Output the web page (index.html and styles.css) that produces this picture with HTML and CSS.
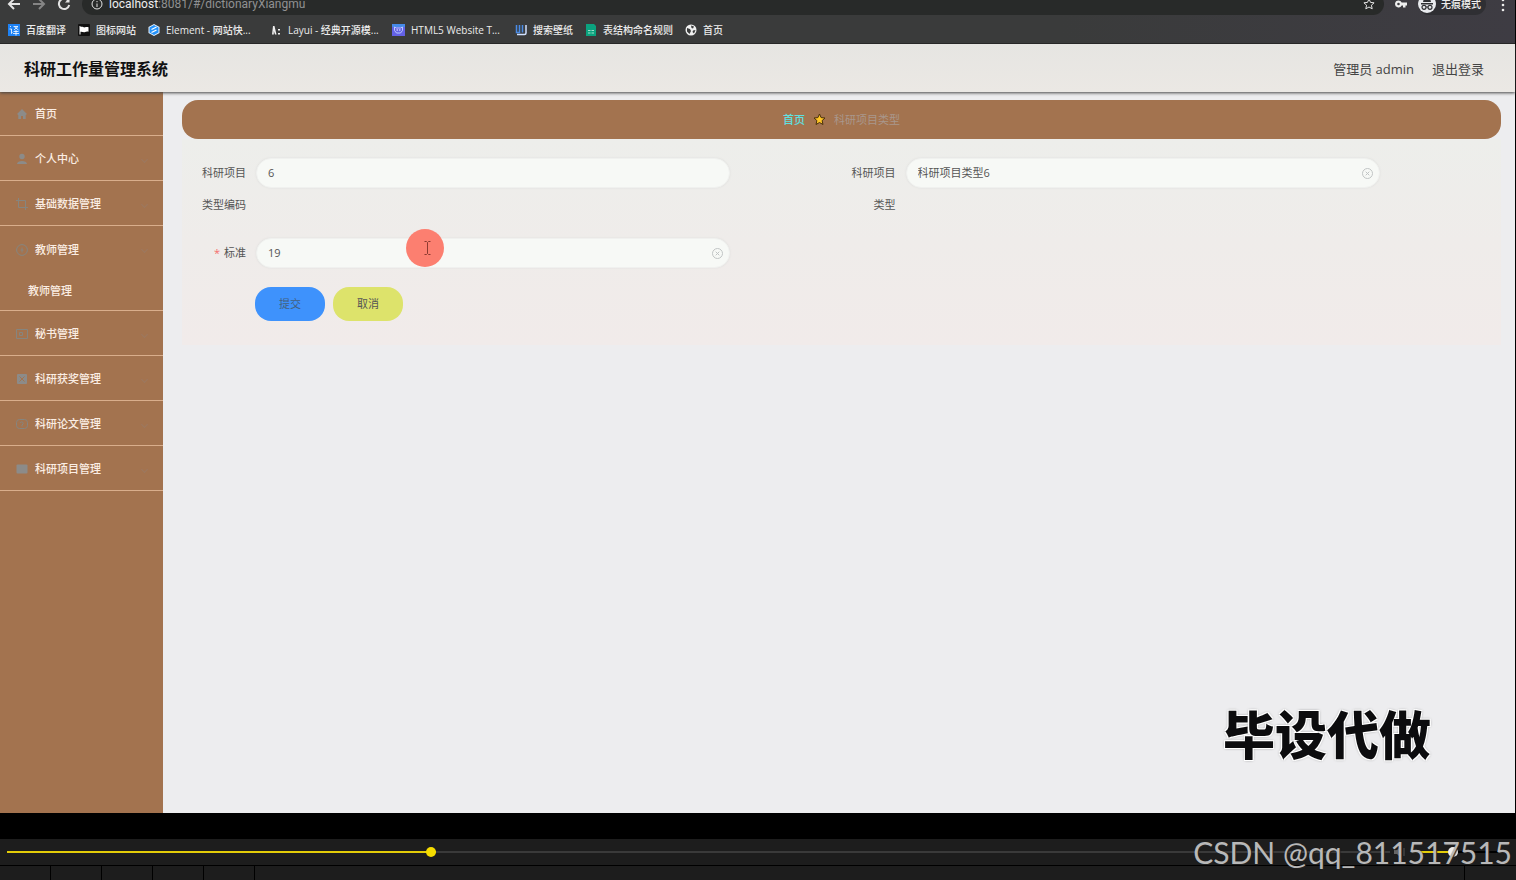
FILE: index.html
```html
<!DOCTYPE html>
<html lang="zh-CN">
<head>
<meta charset="utf-8">
<title>科研工作量管理系统</title>
<link rel="stylesheet" href="styles.css">
</head>
<body>
<div class="screen">
  <div class="toolbar">
    <button class="tool back" aria-label="后退"><svg width="14" height="14" viewBox="0 0 14 14"><path d="M13 7H2M7 2L2 7l5 5" /></svg></button>
    <button class="tool forward" aria-label="前进"><svg width="14" height="14" viewBox="0 0 14 14"><path d="M1 7h11M7 2l5 5-5 5" /></svg></button>
    <button class="tool reload" aria-label="刷新"><svg width="14" height="14" viewBox="0 0 14 14"><path d="M11.5 4A5.2 5.2 0 1 0 12.200 8" /><path d="M12.500 1v4.500H8z" class="solid" /></svg></button>
    <div class="address">
      <svg width="12" height="12" viewBox="0 0 12 12"><circle cx="6" cy="6" r="5" /><path d="M6 5.500V9M6 3v1.200" /></svg>
      <span class="url"><b>localhost</b>:8081/#/dictionaryXiangmu</span>
      <svg class="star" width="12" height="12" viewBox="0 0 12 12"><path d="M6 1l1.500 3.400 3.600.4-2.700 2.400.8 3.600L6 9l-3.200 1.800.8-3.600L.9 4.800l3.600-.4z" /></svg>
    </div>
    <svg class="key" width="12" height="12" viewBox="0 0 12 12"><path fill-rule="evenodd" d="M3.500 2.500a3.500 3.500 0 1 0 3.200 5H8V9.500h2.500V7.500H12V4.500H6.700A3.500 3.500 0 0 0 3.500 2.500zm0 2.200a1.300 1.300 0 1 1 0 2.600 1.300 1.300 0 0 1 0-2.600z" /></svg>
    <div class="incognito">
      <svg width="18" height="18" viewBox="0 0 18 18"><circle cx="9" cy="9" r="9" fill="#e8eaed" /><path d="M6 3h6l1 4H5zM3 8h12v1.500H3z" fill="#303134" /><g fill="none" stroke="#303134" stroke-width="1.200"><circle cx="6" cy="12.300" r="2" /><circle cx="12" cy="12.300" r="2" /><path d="M8 12h2" /></g></svg>
      <span>无痕模式</span>
    </div>
    <svg class="dots" width="4" height="14" viewBox="0 0 4 14"><circle cx="2" cy="2" r="1.300" /><circle cx="2" cy="7" r="1.300" /><circle cx="2" cy="12" r="1.300" /></svg>
  </div>

  <nav class="bookmarks">
    <a href="#"><svg width="12" height="12" viewBox="0 0 12 12"><rect width="12" height="12" fill="#1d82f5" /><path d="M2 2l1 1M1.500 5h2v4.500l1-1M5.500 2.500h4.500L6 6M6.500 3l4 3M5.500 7.500h5M5 9.500h6M8 6v5.500" fill="none" stroke="#fff" stroke-width=".8" /></svg><span>百度翻译</span></a>
    <a href="#"><svg width="12" height="12" viewBox="0 0 12 12"><rect width="12" height="12" rx="1" fill="#111" /><path d="M1.500 2h1v8.500h-1zM2.500 3c2-1 3 .8 4.500.3s2.500-.5 3.500 0v4.500c-1.500-.6-2.500.2-4 .4S3.500 7.200 2.500 7.800z" fill="#fff" /></svg><span>图标网站</span></a>
    <a href="#"><svg width="12" height="12" viewBox="0 0 12 12"><path d="M6 0l5.500 3v6L6 12 .5 9V3z" fill="#e9f4ff" /><path d="M6 1l4.500 2.500v5L6 11 1.500 8.500v-5z" fill="#2492fa" /><path d="M3.500 5.500L8.500 3M3.500 8.500l5-2.500" stroke="#fff" stroke-width="1.300" /></svg><span class="long">Element - 网站快...</span></a>
    <a href="#"><svg width="12" height="12" viewBox="0 0 12 12"><path d="M3 2h1.500l2 8.500H5L3.800 7v3.500H2zM8 5h2v1.500H8zM8 9h2v1.500H8z" fill="#eee" /></svg><span class="long">Layui - 经典开源模...</span></a>
    <a href="#"><svg width="13" height="12" viewBox="0 0 13 12"><path d="M0 0h13v12H0z" fill="#6361e6" /><path d="M0 0h13v3H0z" fill="#468ae9" /><path d="M2.500 3l2 1h4l2-1v3.500L8.500 9h-4l-2-2.500z" fill="none" stroke="#b9caff" /><path d="M4.500 6h1.500M7 6h1.500" stroke="#fff" /></svg><span class="long">HTML5 Website T...</span></a>
    <a href="#"><svg width="12" height="12" viewBox="0 0 12 12"><path d="M1.500 1v7.500h3V1M7.500 1v7.500" fill="none" stroke="#4a8be6" stroke-width="1.500" /><path d="M11 1v8q0 1.500-1.500 1.500H2" fill="none" stroke="#cfe0ff" stroke-width="1.500" /></svg><span>搜索壁纸</span></a>
    <a href="#"><svg width="12" height="12" viewBox="0 0 12 12"><path d="M1 0h8l2 2v10H1z" fill="#0ba37f" /><path d="M3 6.500h2.500M6.500 6.500H9M3 9h2.500M6.500 9H9" stroke="#9fe0cb" stroke-width="1.200" /></svg><span>表结构命名规则</span></a>
    <a href="#"><svg width="12" height="12" viewBox="0 0 12 12"><circle cx="6" cy="6" r="5.500" fill="#f0f0f0" /><path d="M2 4l3 1 1 2-1.500 3L2 7.500zM6 1.500l3 1L8 4.500 6.500 4zM8 6.500l2.500-.5L9 9.500 7.500 8z" fill="#3b3c3c" /></svg><span>首页</span></a>
  </nav>

  <header class="header">
    <h1>科研工作量管理系统</h1>
    <div class="account"><span>管理员 admin</span><a href="#">退出登录</a></div>
  </header>

  <div class="body">
    <aside class="sidebar">
      <ul class="menu">
        <li><a href="#"><svg viewBox="0 0 12 12"><path class="fill" d="M6 1l5 5-1.300 1v4H7V8H5v3H2.300V7L1 6z" /></svg>首页</a></li>
        <li><a href="#"><svg viewBox="0 0 12 12"><circle class="fill" cx="6" cy="3.500" r="2.700" /><path class="fill" d="M1 11c0-4 10-4 10 0z" /></svg>个人中心<i class="arrow"></i></a></li>
        <li><a href="#"><svg viewBox="0 0 12 12"><path d="M2.500 0v9.500H12M0 2.500h9.500V12" /></svg>基础数据管理<i class="arrow"></i></a></li>
        <li class="open"><a href="#"><svg viewBox="0 0 12 12"><circle cx="6" cy="6" r="5.400" /><path d="M6 3.500v5M4.500 6h3" /></svg>教师管理<i class="arrow"></i></a>
          <ul class="submenu"><li><a href="#">教师管理</a></li></ul></li>
        <li><a href="#"><svg viewBox="0 0 12 12"><path d="M.5 1.500h11v9H.5zM3.500 4.500h3v3h-3z" /></svg>秘书管理<i class="arrow"></i></a></li>
        <li><a href="#"><svg viewBox="0 0 12 12"><rect class="fill" x="1" y="1" width="10" height="10" rx="1" /><path class="cut" d="M3.500 3.500l5 5M8.500 3.500l-5 5" /></svg>科研获奖管理<i class="arrow"></i></a></li>
        <li><a href="#"><svg viewBox="0 0 12 12"><rect x=".5" y="1.500" width="11" height="9" rx="3" /><path d="M4 5c1-2 4-1 3 1L6 7v1.500" /></svg>科研论文管理<i class="arrow"></i></a></li>
        <li><a href="#"><svg viewBox="0 0 12 12"><rect class="fill" x=".5" y="1.500" width="11" height="9" rx="1" /></svg>科研项目管理<i class="arrow"></i></a></li>
      </ul>
    </aside>

    <main class="main">
      <nav class="crumbs">
        <a href="#">首页</a>
        <svg width="13" height="13" viewBox="0 0 13 13"><path d="M6.500 1l1.600 3.600 3.900.4-2.900 2.600.9 3.900-3.500-2-3.500 2 .9-3.900L1 5l3.900-.4z" /></svg>
        <span>科研项目类型</span>
      </nav>
      <form class="form">
        <div class="fields">
          <div class="field"><label for="code">科研项目类型编码</label><div class="control"><input id="code" type="text" value="6"></div></div>
          <div class="field"><label for="type">科研项目类型</label><div class="control"><input id="type" type="text" value="科研项目类型6"><button type="button" class="clear" aria-label="清空"><svg width="11" height="11" viewBox="0 0 11 11"><circle cx="5.500" cy="5.500" r="5" /><path d="M3.700 3.700l3.600 3.600M7.300 3.700L3.700 7.300" /></svg></button></div></div>
          <div class="field required"><label for="standard">标准</label><div class="control"><input id="standard" type="text" value="19"><button type="button" class="clear" aria-label="清空"><svg width="11" height="11" viewBox="0 0 11 11"><circle cx="5.500" cy="5.500" r="5" /><path d="M3.700 3.700l3.600 3.600M7.300 3.700L3.700 7.300" /></svg></button></div></div>
        </div>
        <div class="actions"><button type="button" class="submit">提交</button><button type="button" class="cancel">取消</button></div>
      </form>
      <div class="stamp">毕设代做</div>
    </main>
  </div>
  <div class="pointer"><svg width="7" height="14" viewBox="0 0 7 14"><path d="M.5.500h2l1 1 1-1h2M3.500 1.500v11M.5 13.500h2l1-1 1 1h2" /></svg></div>
</div>

<footer class="player">
  <div class="timeline">
    <input class="seek" type="range" min="0" max="1000" value="305" aria-label="播放进度">
    <svg width="12" height="12" viewBox="0 0 12 12"><path d="M0 4h3l4-4v12L3 8H0z" fill="#666" /><path d="M10 2v8" stroke="#555" /></svg>
    <input class="volume" type="range" min="0" max="100" value="46" aria-label="音量">
  </div>
  <div class="panel"><span></span><span></span><span></span><span></span><span></span><span class="wide"></span><span class="last"></span></div>
  <div class="credit">CSDN @qq_811517515</div>
</footer>
</body>
</html>
```
FILE: styles.css
```css
* { box-sizing: border-box; }
body {
  margin: 0;
  height: 100vh;
  display: flex;
  flex-direction: column;
  overflow: hidden;
  background: #000;
  font: 11px/16px "Open Sans", "Noto Sans CJK SC", sans-serif;
  color: #555;
}
a { color: inherit; text-decoration: none; }
button { border: 0; padding: 0; background: none; font: inherit; color: inherit; }
ul { list-style: none; margin: 0; padding: 0; }
svg { flex: none; }

.screen {
  position: relative;
  flex: 1;
  min-height: 0;
  display: flex;
  flex-direction: column;
  margin: 0 1px 26px 0;
}

/* Browser chrome */
.toolbar {
  flex: none;
  height: 15px;
  overflow: hidden;
  display: flex;
  align-items: flex-end;
  padding: 0 10px 0 7px;
  background: linear-gradient(90deg, #3a3b3b 70%, #3e3c43);
}
.toolbar > * { height: 22px; }
.toolbar svg { fill: none; stroke: #e4e4e4; }
.tool { display: flex; align-items: center; width: 14px; margin-right: 11px; }
.tool svg { stroke-width: 2; }
.tool.forward svg { stroke: #858585; }
.tool .solid { fill: #e4e4e4; stroke: none; }
.address {
  flex: 1;
  display: flex;
  align-items: center;
  gap: 6px;
  margin-right: 11px;
  padding: 0 9px;
  border-radius: 11px;
  background: #282a29;
  font-family: Roboto, sans-serif;
  font-size: 12px;
  color: #909192;
}
.address b { font-weight: 400; color: #eee; }
.address .star { margin-left: auto; }
.toolbar .key { width: 12px; fill: #eee; stroke: none; margin-right: 11px; }
.incognito {
  display: flex;
  align-items: center;
  gap: 5px;
  padding-right: 5px;
  border-radius: 11px;
  background: #2f2f33;
  color: #eee;
  font-size: 10px;
  font-weight: 500;
}
.incognito svg { stroke: none; }
.toolbar .dots { height: 20px; margin-left: 15px; fill: #eee; stroke: none; }

.bookmarks {
  flex: none;
  height: 29px;
  display: flex;
  align-items: center;
  gap: 12px;
  padding: 2px 0 0 8px;
  border-bottom: 1px solid #222;
  background: linear-gradient(90deg, #3a3b3b 70%, #3e3c43);
  color: #ececec;
  font-size: 10px;
  font-weight: 500;
  white-space: nowrap;
}
.bookmarks a { display: flex; align-items: center; gap: 6px; }
.bookmarks .long { width: 92px; }

/* Application header */
.header {
  position: relative;
  z-index: 1;
  flex: none;
  height: 48px;
  margin-bottom: -1px;
  display: flex;
  align-items: center;
  justify-content: space-between;
  padding: 1px 31px 0 24px;
  background: linear-gradient(#e6e5e2, #ebe8e4);
  box-shadow: 0 1px 3px #444;
}
.header h1 { margin: 0; font-size: 16px; line-height: 24px; color: #111; }
.account { display: flex; gap: 18px; font-size: 13px; color: #444; }

.body { flex: 1; min-height: 0; display: flex; background: #ededef; }

.sidebar {
  flex: none;
  width: 163px;
  background: #a3734f;
  color: #fbeee4;
  font-weight: 500;
}
.menu > li { border-bottom: 1px solid #d9ae8c; }
.menu > li > a { display: flex; align-items: center; height: 44px; padding: 2px 16px 0; }
.menu > .open > a { height: 45px; }
.menu svg { width: 12px; height: 12px; margin-right: 7px; fill: none; stroke: #86857f; }
.menu .fill { fill: #8c8b89; stroke: none; }
.menu .cut { stroke: #a3734f; }
.arrow {
  width: 5px;
  height: 5px;
  margin-left: auto;
  border: solid #9d7860;
  border-width: 0 1px 1px 0;
  transform: rotate(45deg);
}
.submenu a { display: flex; align-items: center; height: 39px; padding-left: 28px; }

.main { position: relative; flex: 1; padding: 9px 14px 0 19px; }
.crumbs {
  height: 39px;
  display: flex;
  align-items: center;
  justify-content: center;
  gap: 8px;
  border-radius: 16px;
  background: #a3734f;
  color: #a9978c;
}
.crumbs a { color: #5fe0e0; font-weight: 500; }
.crumbs svg { fill: #ffc526; stroke: #49300c; }

.form {
  padding: 18px 10px 24px;
  background: linear-gradient(#edeeeb, #efecea 50%, #f1ebea);
}
.fields { display: grid; grid-template-columns: 1fr 1fr; row-gap: 16px; }
.field { display: flex; align-items: flex-start; line-height: 32px; }
.field label { flex: none; width: 64px; padding-right: 10px; text-align: right; }
.required label::before { content: "*"; margin-right: 4px; color: #f56c6c; }
.control { position: relative; display: flex; align-items: center; width: 73%; height: 32px; }
.control input {
  width: 100%;
  height: 30px;
  padding: 0 11px;
  border: 1px solid #f0f1ef;
  border-radius: 15px;
  background: #f7f9f6;
  box-shadow: 0 0 2px #dddddb;
  font: inherit;
  color: #555;
  outline: 0;
}
.clear { position: absolute; right: 7px; display: flex; }
.clear svg { fill: none; stroke: #c0c4c4; }
.actions { display: flex; gap: 8px; padding: 18px 0 0 63px; }
.actions button { width: 70px; height: 34px; border-radius: 16px; }
.submit { background: #3e92fc; color: #43607c; }
.cancel { background: #dde36b; color: #555; }

.stamp {
  position: absolute;
  right: 84px;
  bottom: 40px;
  font-size: 52px;
  line-height: 76px;
  font-weight: 900;
  color: #0c0c0e;
  text-shadow: 1px 1px 0 #fff, -1px -1px 0 #fff, 1px -1px 0 #fff, -1px 1px 0 #fff, 0 0 3px #555;
}
.pointer {
  position: absolute;
  left: 406px;
  top: 229px;
  z-index: 2;
  width: 38px;
  height: 38px;
  display: grid;
  place-items: center;
  border-radius: 50%;
  background: #fc7f70;
}
.pointer svg { margin-left: 4px; fill: none; stroke: #8c3a30; }

/* Video player */
.player { position: relative; flex: none; background: #1d1d1d; }
.timeline {
  height: 27px;
  display: flex;
  align-items: center;
  padding: 0 18px 0 7px;
  border-bottom: 1px solid #000;
}
.timeline input { appearance: none; margin: 0; height: 12px; background: none; }
.seek { flex: 1; }
.timeline svg { margin: 0 8px 0 4px; }
.volume { width: 84px; }
.seek::-webkit-slider-runnable-track { height: 2px; background: linear-gradient(90deg, #e3cc08 31%, #3a3a3a 31%); }
.volume::-webkit-slider-runnable-track { height: 2px; background: linear-gradient(90deg, #e3cc08 46%, #000 46%); }
.timeline input::-webkit-slider-thumb {
  appearance: none;
  width: 10px;
  height: 10px;
  margin-top: -4px;
  border-radius: 50%;
  background: #f6dc00;
}
.timeline .volume::-webkit-slider-thumb { background: #eee; }
.panel { display: flex; height: 14px; }
.panel span { width: 51px; border-right: 1px solid #000; }
.panel .wide { flex: 1; }
.panel .last { border: 0; }
.credit {
  position: absolute;
  right: 4px;
  bottom: 4px;
  font: 30px/48px Lato, sans-serif;
  color: #b8b8b8;
  text-shadow: 1px 1px 1px #222;
}
```
